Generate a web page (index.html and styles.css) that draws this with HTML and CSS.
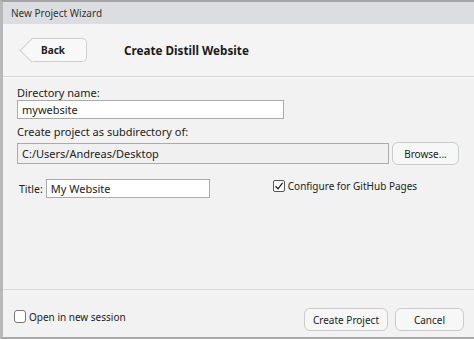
FILE: index.html
```html
<!DOCTYPE html>
<html lang="en">
<head>
  <meta charset="UTF-8">
  <title>New Project Wizard</title>
  <link rel="stylesheet" href="styles.css">
</head>
<body>
  <div class="window">
    <div class="titlebar">New Project Wizard</div>

    <div class="header">
      <button class="back">Back</button>
      <h2>Create Distill Website</h2>
    </div>

    <div class="content">
      <label class="label first">Directory name:</label>
      <input type="text" class="dir-name" value="mywebsite">

      <label class="label second">Create project as subdirectory of:</label>
      <div class="path-row">
        <input type="text" class="path" value="C:/Users/Andreas/Desktop" readonly>
        <button class="btn browse">Browse...</button>
      </div>

      <div class="options">
        <div class="title-field">
          <span>Title:</span>
          <input type="text" class="title-input" value="My Website">
        </div>
        <label class="check gh">
          <span class="box checked">
            <svg width="10" height="10" viewBox="0 0 10 10"><path d="M1.5 5.2 L4 7.8 L8.6 1.8" fill="none" stroke="#222" stroke-width="1.3"/></svg>
          </span>
          Configure for GitHub Pages
        </label>
      </div>
    </div>

    <div class="footer">
      <label class="check session">
        <span class="box"></span>
        Open in new session
      </label>
      <div class="actions">
        <button class="btn create">Create Project</button>
        <button class="btn cancel">Cancel</button>
      </div>
    </div>
  </div>
</body>
</html>
```

FILE: styles.css
```css
body {
  margin: 0;
  background-color: #f2f2f2;
  color: #222;
  font-family: "Noto Sans", "Open Sans", sans-serif;
  font-size: 11px;
}

.window {
  height: 335px;
  border-top: 2px solid #a4a4a6;
  border-bottom: 2px solid #a8a8a8;
  border-left: 3px solid #b8b8ba;
  background-color: #f2f2f2;
  display: flex;
  flex-direction: column;
}

.titlebar {
  height: 22px;
  line-height: 22px;
  padding-left: 8px;
  background-color: #dcdde0;
  color: #333;
  font-size: 10px;
}

.header {
  height: 52px;
  display: flex;
  align-items: center;
  background-color: #f4f4f4;
  border-bottom: 1px solid #d4d4d4;
  box-shadow: 0 1px 0 #fafafa;
}

.back {
  position: relative;
  z-index: 0;
  margin-left: 28px;
  width: 56px;
  height: 24px;
  padding: 0 0 0 10px;
  border: 1px solid #cfcfcf;
  border-left: none;
  border-radius: 0 5px 5px 0;
  background-color: #f8f8f8;
  font-family: inherit;
  font-size: 10px;
  font-weight: bold;
  color: #222;
  text-align: left;
}

.back::before {
  content: "";
  position: absolute;
  left: -8px;
  top: 2.5px;
  width: 16px;
  height: 16px;
  transform: rotate(45deg);
  border-left: 1px solid #cfcfcf;
  border-bottom: 1px solid #cfcfcf;
  background-color: #f8f8f8;
  z-index: -1;
}

.header h2 {
  margin: 0 0 0 37px;
  font-size: 11.7px;
  font-weight: bold;
  color: #1a1a1a;
}

.content {
  flex: 1;
  padding: 0 15px 0 14px;
}

.label {
  display: block;
  line-height: 14px;
  height: 14px;
}

.label.first {
  margin-top: 9px;
}

.label.second {
  margin-top: 6px;
  margin-bottom: 3px;
}

input {
  box-sizing: border-box;
  border: 1px solid #ababab;
  background-color: #fff;
  font-family: inherit;
  font-size: 11px;
  color: #222;
  padding: 0 4px;
  margin: 0;
  outline: none;
}

.dir-name {
  display: block;
  width: 267px;
  height: 19px;
}

.path-row {
  display: flex;
  align-items: center;
  gap: 3px;
  height: 23px;
}

.path {
  width: 372px;
  height: 21px;
  background-color: #f0f0f0;
}

.btn {
  box-sizing: border-box;
  height: 23px;
  border: 1px solid #cbcbcb;
  border-radius: 6px;
  background-color: #f7f7f7;
  font-family: inherit;
  font-size: 10px;
  color: #222;
  padding: 0;
}

.browse {
  width: 67px;
}

.options {
  display: flex;
  margin-top: 14px;
}

.title-field {
  display: flex;
  align-items: center;
  gap: 3px;
  padding-left: 2px;
  height: 19px;
}

.title-field span {
  font-size: 10.5px;
}

.title-input {
  width: 164px;
  height: 19px;
}

.check {
  display: flex;
  align-items: center;
  gap: 3px;
  font-size: 10px;
}

.gh {
  margin-left: 63px;
  margin-top: -3px;
  height: 19px;
}

.box {
  box-sizing: border-box;
  width: 12px;
  height: 12px;
  border: 1px solid #555;
  border-radius: 2px;
  background-color: #fff;
  display: flex;
  align-items: center;
  justify-content: center;
}

.footer {
  height: 47px;
  border-top: 1px solid #dadada;
  display: flex;
  justify-content: space-between;
  padding: 0 10px 0 11px;
}

.session {
  margin-top: 17px;
  height: 19px;
}

.session .box {
  width: 12px;
  height: 13px;
  border-color: #777;
  border-radius: 3px;
}

.actions {
  display: flex;
  gap: 7px;
  margin-top: 18px;
}

.create {
  width: 84px;
}

.cancel {
  width: 69px;
}
```
